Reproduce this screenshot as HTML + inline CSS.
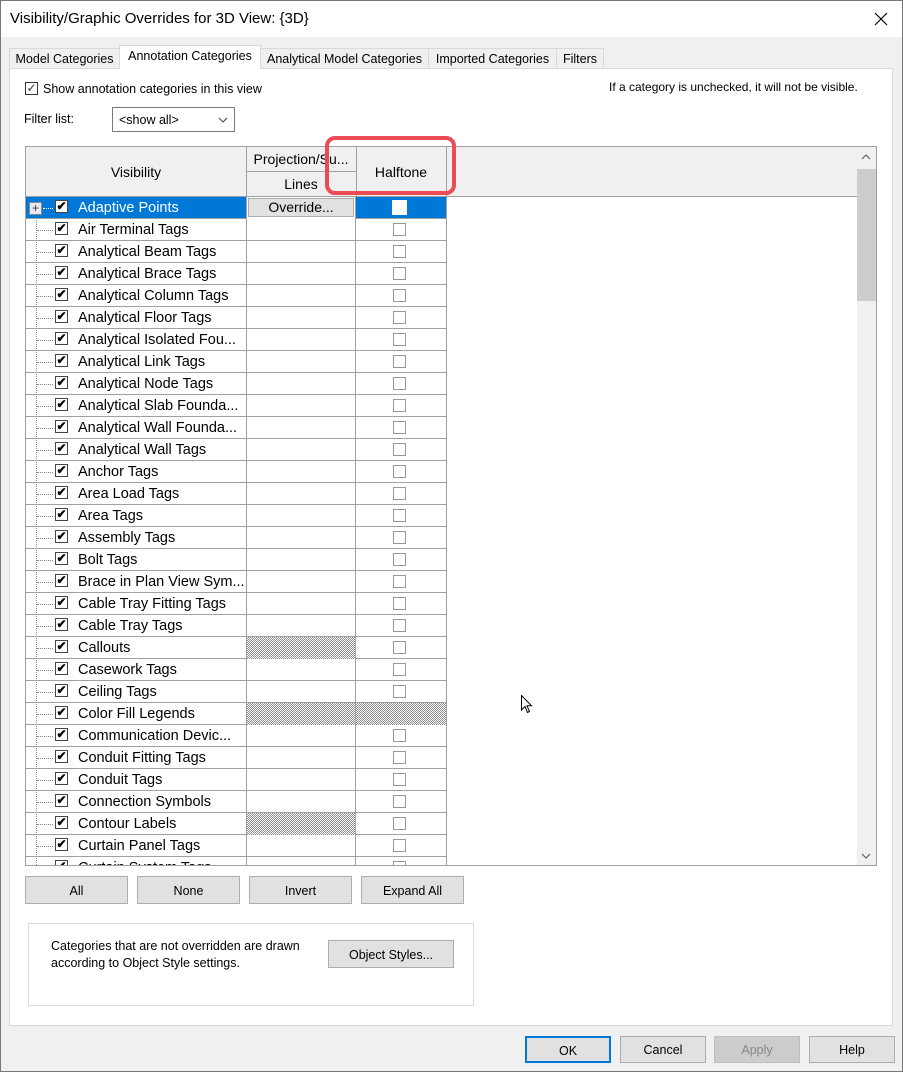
<!DOCTYPE html>
<html><head><meta charset="utf-8"><style>
*{box-sizing:border-box;margin:0;padding:0}
body{width:903px;height:1072px;background:#f0f0f0;font-family:"Liberation Sans",sans-serif;color:#000;position:relative;overflow:hidden}
.a{position:absolute}
.win{left:0;top:0;width:903px;height:1072px;border:1px solid #777}
.title{left:1px;top:1px;width:901px;height:36px;background:#fff;font-size:15px;padding:9px 0 0 9px}
.tab{top:48px;height:21px;border:1px solid #d9d9d9;border-bottom:none;font-size:12.5px;padding-top:3px;text-align:center;background:#f0f0f0}
.tab.sel{top:45px;height:24px;background:#fff;border-color:#d9d9d9;z-index:2}
.panel{left:9px;top:68px;width:884px;height:958px;background:#fff;border:1px solid #d9d9d9}
.cb{width:13px;height:13px;border:1px solid #333;background:#fff}
.btn{background:#e1e1e1;border:1px solid #adadad;font-size:12.5px;text-align:center}
.grid{left:25px;top:146px;width:852px;height:720px;border:1px solid #a0a0a0;background:#fff;overflow:hidden}
.hd{background:#f0f0f0;font-size:14px;text-align:center}
.ln{position:absolute;background:#a0a0a0}
.row{position:absolute;left:0;width:421px;height:22px;border-bottom:1px solid #a0a0a0;font-size:14.5px}
.row .n{position:absolute;left:52px;top:3px;white-space:nowrap}
.row .c1{position:absolute;left:220px;top:0;width:110px;height:22px;border-left:1px solid #a0a0a0;border-right:1px solid #a0a0a0}
.row .c2{position:absolute;left:330px;top:0;width:91px;height:22px;border-right:1px solid #a0a0a0}
.row .hb{position:absolute;left:29px;top:3px;width:13px;height:13px;border:1px solid #444;background:#fff;color:#000;font-size:12px;line-height:11px;text-align:center;font-weight:bold}
.row .h{position:absolute;left:37px;top:4px;width:13px;height:13px;border:1px solid #999;background:#fff}
.row .dot{position:absolute;left:11px;top:11px;width:16px;border-top:1px dotted #888}
.vl{position:absolute;left:10px;top:60px;height:700px;border-left:1px dotted #888}
.hatch{background:repeating-conic-gradient(#8a8a8a 0 25%,#fff 0 50%) 0 0/2px 2px}
</style></head><body>
<div class="a win"></div>
<div class="a title">Visibility/Graphic Overrides for 3D View: {3D}</div>
<svg class="a" style="left:874px;top:12px" width="14" height="14"><path d="M1 1L13 13M13 1L1 13" stroke="#000" stroke-width="1.2"/></svg>
<div class="a tab" style="left:9px;width:111px">Model Categories</div>
<div class="a tab sel" style="left:119px;width:142px">Annotation Categories</div>
<div class="a tab" style="left:260px;width:169px">Analytical Model Categories</div>
<div class="a tab" style="left:428px;width:129px">Imported Categories</div>
<div class="a tab" style="left:556px;width:48px">Filters</div>
<div class="a panel"></div>
<div class="a cb" style="left:25px;top:82px;border-color:#333;font-size:12px;line-height:11px;text-align:center;color:#333">✓</div>
<div class="a" style="left:43px;top:82px;font-size:12.5px">Show annotation categories in this view</div>
<div class="a" style="left:609px;top:80px;font-size:12px">If a category is unchecked, it will not be visible.</div>
<div class="a" style="left:24px;top:112px;font-size:12.5px">Filter list:</div>
<div class="a" style="left:112px;top:107px;width:123px;height:25px;border:1px solid #7a7a7a;background:#fff;font-size:12.5px;padding:5px 0 0 6px">&lt;show all&gt;<svg style="position:absolute;right:6px;top:9px" width="10" height="6"><path d="M1 1L5 5L9 1" stroke="#444" fill="none"/></svg></div>
<div class="a grid">
 <div class="a hd" style="left:0;top:0;width:831px;height:50px"></div>
 <div class="a hd" style="left:0;top:0;width:220px;padding-top:17px">Visibility</div>
 <div class="a hd" style="left:220px;top:4px;width:110px">Projection/Su...</div>
 <div class="a hd" style="left:220px;top:29px;width:110px">Lines</div>
 <div class="a hd" style="left:330px;top:17px;width:90px">Halftone</div>
 <div class="ln" style="left:220px;top:0;width:1px;height:50px"></div>
 <div class="ln" style="left:330px;top:0;width:1px;height:50px"></div>
 <div class="ln" style="left:420px;top:0;width:1px;height:50px"></div>
 <div class="ln" style="left:220px;top:24px;width:110px;height:1px"></div>
 <div class="ln" style="left:0;top:49px;width:831px;height:1px"></div>
 <div class="a" style="left:831px;top:0;width:20px;height:719px;background:#f0f0f0"></div>
 <div class="a" style="left:831px;top:22px;width:19px;height:132px;background:#cdcdcd"></div>
 <svg class="a" style="left:835px;top:7px" width="10" height="6"><path d="M1 5L5 1L9 5" stroke="#555" fill="none"/></svg>
 <svg class="a" style="left:835px;top:706px" width="10" height="6"><path d="M1 1L5 5L9 1" stroke="#555" fill="none"/></svg>
 <div class="vl"></div>
 <div id="rows"></div>
</div>
<div class="a" style="left:325px;top:136px;width:131px;height:59px;border:4px solid #ea4b55;border-radius:10px"></div>
<div class="a btn" style="left:25px;top:876px;width:103px;height:28px;padding-top:7px">All</div>
<div class="a btn" style="left:137px;top:876px;width:103px;height:28px;padding-top:7px">None</div>
<div class="a btn" style="left:249px;top:876px;width:103px;height:28px;padding-top:7px">Invert</div>
<div class="a btn" style="left:361px;top:876px;width:103px;height:28px;padding-top:7px">Expand All</div>
<div class="a" style="left:28px;top:923px;width:446px;height:83px;border:1px solid #dcdcdc"></div>
<div class="a" style="left:51px;top:938px;font-size:12.5px;line-height:17px">Categories that are not overridden are drawn<br>according to Object Style settings.</div>
<div class="a btn" style="left:328px;top:940px;width:126px;height:28px;padding-top:7px">Object Styles...</div>
<div class="a btn" style="left:525px;top:1036px;width:86px;height:27px;padding-top:6px;border:2px solid #0078d7">OK</div>
<div class="a btn" style="left:620px;top:1036px;width:86px;height:27px;padding-top:6px">Cancel</div>
<div class="a btn" style="left:714px;top:1036px;width:86px;height:27px;padding-top:6px;background:#ccc;border-color:#bfbfbf;color:#888">Apply</div>
<div class="a btn" style="left:809px;top:1036px;width:86px;height:27px;padding-top:6px">Help</div>
<svg class="a" style="left:521px;top:695px" width="12" height="19"><path d="M0.5 0.5L0.5 15L4 11.5L6.5 17.5L8.5 16.5L6 10.8L10.5 10.8Z" fill="#fff" stroke="#000"/></svg>
<script>
var n=["Adaptive Points","Air Terminal Tags","Analytical Beam Tags","Analytical Brace Tags","Analytical Column Tags","Analytical Floor Tags","Analytical Isolated Fou...","Analytical Link Tags","Analytical Node Tags","Analytical Slab Founda...","Analytical Wall Founda...","Analytical Wall Tags","Anchor Tags","Area Load Tags","Area Tags","Assembly Tags","Bolt Tags","Brace in Plan View Sym...","Cable Tray Fitting Tags","Cable Tray Tags","Callouts","Casework Tags","Ceiling Tags","Color Fill Legends","Communication Devic...","Conduit Fitting Tags","Conduit Tags","Connection Symbols","Contour Labels","Curtain Panel Tags","Curtain System Tags"];
var h="";
n.forEach(function(s,i){
 var top=50+i*22, sel=i==0;
 var c1=(s=="Callouts"||s=="Color Fill Legends"||s=="Contour Labels")?" hatch":"";
 var c2=(s=="Color Fill Legends")?" hatch":"";
 h+='<div class="row" style="top:'+top+'px;'+(sel?'background:#0078d7;color:#fff;':'')+'">';
 h+=(sel?'<div style="position:absolute;left:3px;top:5px;width:13px;height:13px;border:1px solid #888;background:#e8e8ee;color:#335;font-size:12px;line-height:11px;text-align:center">+</div><div class="dot" style="left:17px;width:10px;border-color:#fff"></div>':'<div class="dot"></div>');
 h+='<div class="hb">✔</div>';
 h+='<div class="n">'+s+'</div>';
 h+='<div class="c1'+c1+'" '+(sel?'style="background:#fff"':'')+'>'+(sel?'<div style="margin:1px 1px;height:19px;background:#e1e1e1;border:1px solid #adadad;color:#000;text-align:center;font-size:14px">Override...</div>':'')+'</div>';
 h+='<div class="c2'+c2+'">'+(c2?'':'<div class="h" style="'+(sel?'border-color:#fff;width:15px;height:15px;top:3px;left:36px':'')+'"></div>')+'</div>';
 h+='</div>';
});
document.getElementById("rows").innerHTML=h;
</script>
</body></html>
